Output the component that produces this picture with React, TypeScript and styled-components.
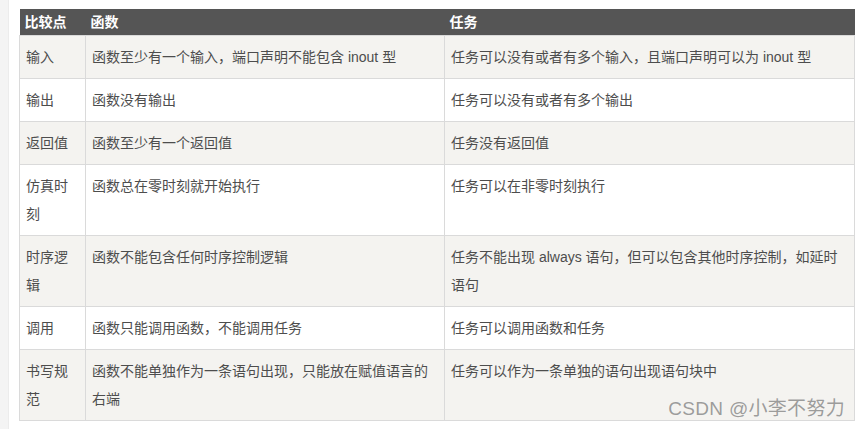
import React from "react";
import styled, { createGlobalStyle } from "styled-components";

interface IRow {
  point: string;
  func: string;
  task: string;
}

const rows: Array<IRow> = [
  {
    point: "输入",
    func: "函数至少有一个输入，端口声明不能包含 inout 型",
    task: "任务可以没有或者有多个输入，且端口声明可以为 inout 型",
  },
  { point: "输出", func: "函数没有输出", task: "任务可以没有或者有多个输出" },
  { point: "返回值", func: "函数至少有一个返回值", task: "任务没有返回值" },
  { point: "仿真时刻", func: "函数总在零时刻就开始执行", task: "任务可以在非零时刻执行" },
  {
    point: "时序逻辑",
    func: "函数不能包含任何时序控制逻辑",
    task: "任务不能出现 always 语句，但可以包含其他时序控制，如延时语句",
  },
  { point: "调用", func: "函数只能调用函数，不能调用任务", task: "任务可以调用函数和任务" },
  {
    point: "书写规范",
    func: "函数不能单独作为一条语句出现，只能放在赋值语言的右端",
    task: "任务可以作为一条单独的语句出现语句块中",
  },
];

const GlobalStyle = createGlobalStyle`
  html, body {
    margin: 0;
    padding: 0;
    background: #fff;
  }
`;

const Page = styled.div`
  position: relative;
  display: flex;
  width: 857px;
  height: 429px;
  overflow: hidden;
  font-family: "Liberation Sans", "Noto Sans CJK SC", sans-serif;
`;

const SideStrip = styled.div`
  width: 8px;
  flex-shrink: 0;
  background: #f4f4f4;
  border-right: 1px solid #ececec;
`;

const Content = styled.div`
  padding: 9px 0 0 10px;
`;

const Table = styled.table`
  border-collapse: collapse;
  table-layout: fixed;
  width: 835px;
  font-size: 14px;
  color: #4d4d4d;
`;

const Col = styled.col<{ $width: number }>`
  width: ${({ $width }) => $width}px;
`;

const HeadCell = styled.th`
  box-sizing: border-box;
  height: 26px;
  padding: 0 5px;
  background: #555;
  color: #fff;
  font-weight: bold;
  text-align: left;
  line-height: 26px;
  border: none;
`;

const Row = styled.tr<{ $shaded: boolean }>`
  background: ${({ $shaded }) => ($shaded ? "#f4f3f0" : "#fff")};
`;

const Cell = styled.td`
  box-sizing: border-box;
  padding: 7px 5px 7px 6px;
  line-height: 28px;
  vertical-align: top;
  border: 1px solid #dadada;
  word-break: break-all;
`;

const Watermark = styled.div`
  position: absolute;
  right: 12px;
  bottom: 9px;
  font-size: 19px;
  color: rgba(140, 140, 140, 0.85);
  letter-spacing: 0.3px;
`;

const App = () => {
  return (
    <>
      <GlobalStyle />
      <Page>
        <SideStrip />
        <Content>
          <Table>
            <colgroup>
              <Col $width={66} />
              <Col $width={359} />
              <Col $width={410} />
            </colgroup>
            <thead>
              <tr>
                <HeadCell>比较点</HeadCell>
                <HeadCell>函数</HeadCell>
                <HeadCell>任务</HeadCell>
              </tr>
            </thead>
            <tbody>
              {rows.map(({ point, func, task }, index) => (
                <Row key={point} $shaded={index % 2 === 0}>
                  <Cell>{point}</Cell>
                  <Cell>{func}</Cell>
                  <Cell>{task}</Cell>
                </Row>
              ))}
            </tbody>
          </Table>
        </Content>
        <Watermark>CSDN @小李不努力</Watermark>
      </Page>
    </>
  );
};

export default App;
